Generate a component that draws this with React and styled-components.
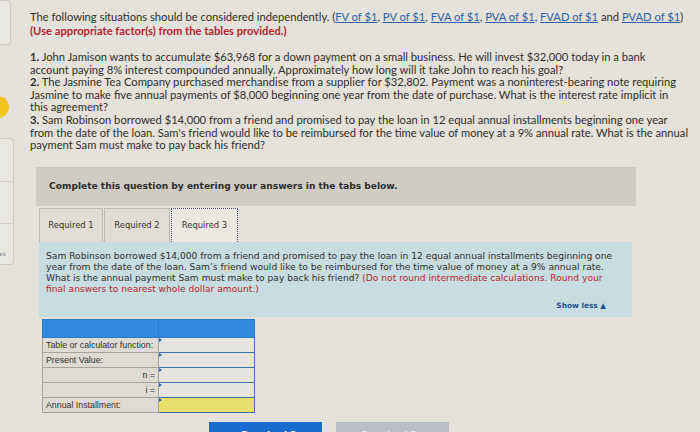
import styled, { createGlobalStyle } from "styled-components";

const GlobalStyle = createGlobalStyle`
  html, body {
    margin: 0;
    padding: 0;
  }
  body {
    background: #e5e2db;
    width: 700px;
    height: 432px;
    overflow: hidden;
    font-family: Lato, "Liberation Sans", sans-serif;
    color: #2e2e2e;
  }
`;

const intro = [
  [["b", "1."], ["t", " John Jamison wants to accumulate $63,968 for a down payment on a small business. He will invest $32,000 today in a bank"]],
  [["t", "account paying 8% interest compounded annually. Approximately how long will it take John to reach his goal?"]],
  [["b", "2."], ["t", " The Jasmine Tea Company purchased merchandise from a supplier for $32,802. Payment was a noninterest-bearing note requiring"]],
  [["t", "Jasmine to make five annual payments of $8,000 beginning one year from the date of purchase. What is the interest rate implicit in"]],
  [["t", "this agreement?"]],
  [["b", "3."], ["t", " Sam Robinson borrowed $14,000 from a friend and promised to pay the loan in 12 equal annual installments beginning one year"]],
  [["t", "from the date of the loan. Sam's friend would like to be reimbursed for the time value of money at a 9% annual rate. What is the annual"]],
  [["t", "payment Sam must make to pay back his friend?"]],
];

const links = ["FV of $1", "PV of $1", "FVA of $1", "PVA of $1", "FVAD of $1"];

const tabs = [
  { label: "Required 1", w: 64 },
  { label: "Required 2", w: 66 },
  { label: "Required 3", w: 67, active: true },
];

const rows = [
  { label: "Table or calculator function:" },
  { label: "Present Value:" },
  { label: "n =", right: true },
  { label: "i =", right: true },
  { label: "Annual Installment:", answer: true },
];

export default function App() {
  return (
    <>
      <GlobalStyle />
      <Page>
        <Sidebar>
          <SideCard $h={45} $w={11} />
          <Dot />
          <SideCard $h={127} $w={14} $top={20}>
            <SideRow $h={42} />
            <SideRow $h={41} />
            <SideLabel>es</SideLabel>
          </SideCard>
        </Sidebar>

        <Main>
          <TopBar>
            <TopAccent />
          </TopBar>

          <Heading>
            <Line>
              The following situations should be considered independently. (
              {links.map((l, i) => (
                <span key={l}>
                  <Link>{l}</Link>
                  {i < links.length - 1 ? ", " : ""}
                </span>
              ))}{" "}
              and <Link>PVAD of $1</Link>)
            </Line>
            <Warn>(Use appropriate factor(s) from the tables provided.)</Warn>
          </Heading>

          <List>
            {intro.map((parts, i) => (
              <Line key={i}>
                {parts.map(([k, t], j) => (k === "b" ? <b key={j}>{t}</b> : <span key={j}>{t}</span>))}
              </Line>
            ))}
          </List>

          <Question>
            <Instruction>Complete this question by entering your answers in the tabs below.</Instruction>

            <Tabs>
              {tabs.map((t) => (
                <Tab key={t.label} $w={t.w} $active={t.active}>
                  {t.label}
                </Tab>
              ))}
            </Tabs>

            <Panel>
              <PanelLine>Sam Robinson borrowed $14,000 from a friend and promised to pay the loan in 12 equal annual installments beginning one</PanelLine>
              <PanelLine>year from the date of the loan. Sam’s friend would like to be reimbursed for the time value of money at a 9% annual rate.</PanelLine>
              <PanelLine>
                What is the annual payment Sam must make to pay back his friend? <Red>(Do not round intermediate calculations. Round your</Red>
              </PanelLine>
              <PanelLine>
                <Red>final answers to nearest whole dollar amount.)</Red>
              </PanelLine>
              <ShowLess>Show less ▲</ShowLess>
            </Panel>

            <Answers>
              <thead>
                <tr>
                  <HeadCell $w={115} />
                  <HeadCell $w={95} />
                </tr>
              </thead>
              <tbody>
                {rows.map((r) => (
                  <tr key={r.label}>
                    <LabelCell $right={r.right}>{r.label}</LabelCell>
                    <InputCell $answer={r.answer} />
                  </tr>
                ))}
              </tbody>
            </Answers>

            <Nav>
              <NavButton>‹ Required 2</NavButton>
              <NavButton $disabled>Required 3 ›</NavButton>
            </Nav>
          </Question>
        </Main>
      </Page>
    </>
  );
}

const Page = styled.div`
  display: flex;
  height: 432px;
  overflow: hidden;
`;

const Sidebar = styled.div`
  width: 15px;
  flex-shrink: 0;
  display: flex;
  flex-direction: column;
`;

const SideCard = styled.div`
  position: relative;
  width: ${(p) => p.$w}px;
  height: ${(p) => p.$h}px;
  margin-top: ${(p) => p.$top || 0}px;
  border: 1px solid #d0cdc6;
  border-left: none;
  border-radius: 0 4px 4px 0;
  background: #e9e7e1;
  box-sizing: border-box;
  display: flex;
  flex-direction: column;
`;

const SideRow = styled.div`
  height: ${(p) => p.$h}px;
  border-bottom: 1px solid #d6d3cc;
`;

const SideLabel = styled.div`
  margin-top: 26px;
  font-family: "DejaVu Sans", sans-serif;
  font-size: 6px;
  color: #777;
  margin-left: -1px;
`;

const Dot = styled.div`
  width: 22px;
  height: 22px;
  border-radius: 50%;
  background: #f1c31c;
  margin: 51px 0 0 -13px;
`;

const Main = styled.div`
  flex: 1;
  padding-left: 15px;
  display: flex;
  flex-direction: column;
  min-width: 0;
`;

const TopBar = styled.div`
  height: 2px;
  display: flex;
  justify-content: flex-end;
`;

const TopAccent = styled.div`
  width: 70px;
  background: #2561ad;
`;

const Heading = styled.div`
  margin-top: 10px;
  font-size: 11.2px;
  line-height: 13.5px;
`;

const Line = styled.div`
  white-space: nowrap;
  b {
    font-weight: 700;
  }
`;

const Link = styled.span`
  color: #2b5fa8;
  text-decoration: underline;
`;

const Warn = styled.div`
  color: #b8232e;
  font-weight: 700;
`;

const List = styled.div`
  margin-top: 14px;
  font-size: 11.2px;
  line-height: 12.6px;
`;

const Question = styled.div`
  margin: 15px 0 0 6px;
  width: 600px;
  font-family: "DejaVu Sans", Verdana, sans-serif;
`;

const Instruction = styled.div`
  height: 39px;
  background: #cfccc4;
  display: flex;
  align-items: center;
  padding-left: 13px;
  font-size: 9.1px;
  font-weight: 700;
  color: #2b2b2b;
`;

const Tabs = styled.div`
  display: flex;
  gap: 1px;
  margin-top: 2px;
  padding-left: 3px;
  height: 34px;
`;

const Tab = styled.div`
  width: ${(p) => p.$w}px;
  box-sizing: border-box;
  display: flex;
  align-items: center;
  justify-content: center;
  font-size: 8.4px;
  color: #333;
  background: ${(p) => (p.$active ? "#ebe8e2" : "#e0ddd6")};
  border: 1px ${(p) => (p.$active ? "dotted #4b5288" : "solid #bdbab3")};
  border-bottom: none;
`;

const Panel = styled.div`
  margin-left: 3px;
  width: 593px;
  box-sizing: border-box;
  background: #c7dde0;
  padding: 9px 7px 6px;
  font-size: 9.15px;
  line-height: 11px;
  color: #303030;
`;

const PanelLine = styled.div`
  white-space: nowrap;
`;

const Red = styled.span`
  color: #b52630;
`;

const ShowLess = styled.div`
  margin-top: 6px;
  text-align: right;
  padding-right: 19px;
  font-size: 7.4px;
  font-weight: 700;
  color: #244e8c;
  line-height: 10px;
`;

const Answers = styled.table`
  margin: 2px 0 0 6px;
  border-collapse: collapse;
  font-family: "Liberation Sans", Arial, sans-serif;
  font-size: 8.8px;
  color: #333;
`;

const HeadCell = styled.th`
  width: ${(p) => p.$w}px;
  height: 17px;
  padding: 0;
  background: #2f8ae0;
  border: 1px solid #2a7cc9;
`;

const LabelCell = styled.td`
  height: 14px;
  padding: 0 3px;
  background: #dddbd4;
  border: 1px solid #a6a39c;
  text-align: ${(p) => (p.$right ? "right" : "left")};
  white-space: nowrap;
`;

const InputCell = styled.td`
  position: relative;
  height: 14px;
  padding: 0;
  background: ${(p) => (p.$answer ? "#e6df6a" : "#e6e4de")};
  border: 1.5px solid #3f6db0;
  &::before {
    content: "";
    position: absolute;
    left: 0;
    top: 0;
    border-left: 3px solid #2a63b8;
    border-top: 2px solid transparent;
    border-bottom: 2px solid transparent;
  }
`;

const Nav = styled.div`
  display: flex;
  gap: 14px;
  margin: 9px 0 0 173px;
`;

const NavButton = styled.div`
  width: 113px;
  height: 26px;
  display: flex;
  align-items: center;
  justify-content: center;
  font-size: 9px;
  font-weight: 700;
  color: ${(p) => (p.$disabled ? "#e4e6ea" : "#ffffff")};
  background: ${(p) => (p.$disabled ? "#b9bdc4" : "#196bcf")};
`;
